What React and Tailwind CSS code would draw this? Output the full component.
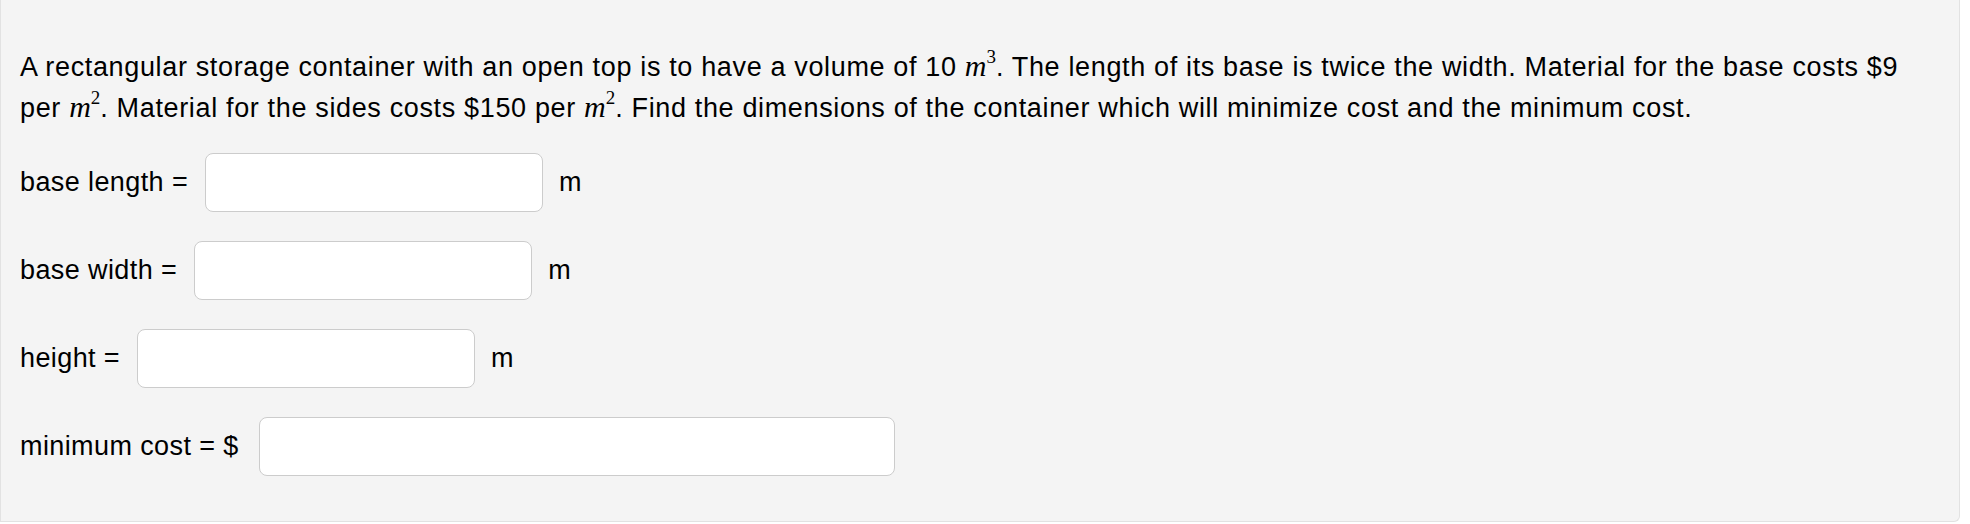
import React from "react";

const M = ({ sup }) => (
  <span className="font-['Liberation_Serif',serif] italic text-[30px] tracking-normal">
    m<sup className="not-italic text-[19px] -top-[13px]">{sup}</sup>
  </span>
);

function Row({ label, width, unit, gap = "ml-[17px]" }) {
  return (
    <div className="flex items-center h-[59px] mb-[29px]">
      <span className="whitespace-pre">{label}</span>
      <input
        type="text"
        className={`${gap} h-[59px] ${width} bg-white border border-[#cccccc] rounded-[8px] outline-none`}
      />
      {unit && <span className="ml-[16px]">{unit}</span>}
    </div>
  );
}

export default function App() {
  return (
    <div className="w-[1970px] h-[524px] bg-white">
      <div className="w-[1960px] h-[522px] bg-[#f4f4f4] border border-t-0 border-[#e2e2e2] rounded-br-[6px] px-[19px] pt-[46px] text-[27px] tracking-[0.4px] text-black font-['Liberation_Sans',Arial,sans-serif]">
        <p className="leading-[40px] mb-[25px] tracking-[0.65px]">
          A rectangular storage container with an open top is to have a volume of 10 <M sup="3" />. The length
          of its base is twice the width. Material for the base costs $9
          <br />
          per <M sup="2" />. Material for the sides costs $150 per <M sup="2" />. Find the dimensions of the
          container which will minimize cost and the minimum cost.
        </p>
        <Row label="base length =" width="w-[338px]" unit="m" />
        <Row label="base width =" width="w-[338px]" unit="m" />
        <Row label="height =" width="w-[338px]" unit="m" />
        <Row label="minimum cost = $" width="w-[636px]" gap="ml-[20px]" />
      </div>
    </div>
  );
}
